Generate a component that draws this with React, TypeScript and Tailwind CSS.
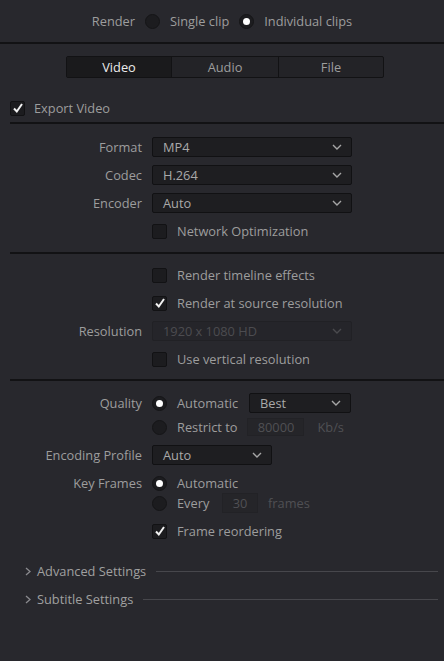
import React from "react"

const font = { fontFamily: '"Open Sans", "Noto Sans", sans-serif' }

function Chevron({ dim }: { dim?: boolean }) {
  return (
    <svg width="10" height="6" viewBox="0 0 10 6" className="shrink-0">
      <polyline
        points="1,1 5,5 9,1"
        fill="none"
        stroke={dim ? "#4a4a4e" : "#a6a6a6"}
        strokeWidth="1.4"
      />
    </svg>
  )
}

function Radio({ on }: { on?: boolean }) {
  return (
    <span className="w-[15px] h-[15px] rounded-full bg-[#1c1c1f] border border-[#151517] flex items-center justify-center shrink-0">
      {on && <span className="w-[7px] h-[7px] rounded-full bg-white" />}
    </span>
  )
}

function Check({ on }: { on?: boolean }) {
  return (
    <span className="w-[15px] h-[15px] rounded-[2px] bg-[#1c1c1f] border border-[#121214] flex items-center justify-center shrink-0">
      {on && (
        <svg width="12" height="12" viewBox="0 0 12 12">
          <polyline points="2,6.5 4.8,9.5 10,2" fill="none" stroke="#f2f2f2" strokeWidth="2" />
        </svg>
      )}
    </span>
  )
}

function Select({ value, width, disabled }: { value: string; width: string; disabled?: boolean }) {
  return (
    <div
      className={`${width} h-[20px] rounded-[2px] border flex items-center justify-between pl-[10px] pr-[9px] ${
        disabled ? "bg-[#25252a] border-[#212125] text-[#4c4c50]" : "bg-[#1e1e21] border-[#111113] text-[#a9a9a9]"
      }`}
    >
      <span className="pt-px">{value}</span>
      <Chevron dim={disabled} />
    </div>
  )
}

function Row({ label, h = "h-[28px]", children }: { label?: string; h?: string; children: React.ReactNode }) {
  return (
    <div className={`flex items-center ${h}`}>
      <div className="w-[142px] shrink-0 text-right pt-px">{label}</div>
      <div className="flex items-center pl-[10px] gap-[10px] whitespace-nowrap">{children}</div>
    </div>
  )
}

function Txt({ children, className = "" }: { children: React.ReactNode; className?: string }) {
  return <span className={`pt-[2px] whitespace-nowrap ${className}`}>{children}</span>
}

function Sep() {
  return <div className="ml-[10px] h-[2px] bg-[#121214]" />
}

function Section({ title }: { title: string }) {
  return (
    <div className="flex items-center h-[28px] pl-[25px] pr-[6px]">
      <svg width="6" height="9" viewBox="0 0 6 9" className="shrink-0">
        <polyline points="1,1 5,4.5 1,8" fill="none" stroke="#8a8a8e" strokeWidth="1.3" />
      </svg>
      <span className="ml-[6px] text-[#a0a0a0] pt-px">{title}</span>
      <div className="flex-1 ml-[10px] h-px bg-[#47474c]" />
    </div>
  )
}

export default function App() {
  return (
    <div className="w-[444px] h-[661px] bg-[#28282d] text-[12.8px] text-[#9d9d9d] overflow-hidden" style={font}>
      {/* Render mode */}
      <div className="h-[42px] flex items-center justify-center gap-[10px]">
        <Txt>Render</Txt>
        <Radio />
        <Txt>Single clip</Txt>
        <Radio on />
        <Txt>Individual clips</Txt>
      </div>
      <div className="h-[2px] bg-[#121214]" />

      {/* Tabs */}
      <div className="mt-[12px] ml-[66px] w-[318px] h-[22px] flex border border-[#121214] rounded-[2px] bg-[#232327]">
        <div className="w-[105px] flex items-center justify-center bg-[#1a1a1c] text-[#ececec] border-r border-[#121214] pt-px">Video</div>
        <div className="w-[107px] flex items-center justify-center border-r border-[#121214] pt-px">Audio</div>
        <div className="flex-1 flex items-center justify-center pt-px">File</div>
      </div>

      <div className="mt-[16px] h-[28px] flex items-center pl-[10px] gap-[9px]">
        <Check on />
        <Txt>Export Video</Txt>
      </div>
      <Sep />

      {/* Format */}
      <div className="mt-[9px]">
        <Row label="Format"><Select value="MP4" width="w-[200px]" /></Row>
        <Row label="Codec"><Select value="H.264" width="w-[200px]" /></Row>
        <Row label="Encoder"><Select value="Auto" width="w-[200px]" /></Row>
        <Row><Check /><Txt>Network Optimization</Txt></Row>
      </div>
      <div className="mt-[7px]"><Sep /></div>

      {/* Resolution */}
      <div className="mt-[7px]">
        <Row><Check /><Txt>Render timeline effects</Txt></Row>
        <Row><Check on /><Txt>Render at source resolution</Txt></Row>
        <Row label="Resolution"><Select value="1920 x 1080 HD" width="w-[200px]" disabled /></Row>
        <Row><Check /><Txt>Use vertical resolution</Txt></Row>
      </div>
      <div className="mt-[6px]"><Sep /></div>

      {/* Quality */}
      <div className="mt-[10px]">
        <Row label="Quality" h="h-[24px]">
          <Radio on />
          <Txt className="w-[62px]">Automatic</Txt>
          <Select value="Best" width="w-[102px]" />
        </Row>
        <Row h="h-[24px]">
          <Radio />
          <Txt>Restrict to</Txt>
          <div className="w-[57px] h-[18px] border border-[#222226] bg-[#252529] text-[#505054] flex items-center justify-center pt-px">80000</div>
          <Txt className="ml-[3px] text-[#505054]">Kb/s</Txt>
        </Row>
      </div>
      <div className="mt-[2px]">
        <Row label="Encoding Profile"><Select value="Auto" width="w-[120px]" /></Row>
      </div>
      <div className="mt-[4px]">
        <Row label="Key Frames" h="h-[20px]">
          <Radio on />
          <Txt>Automatic</Txt>
        </Row>
        <Row h="h-[20px]">
          <Radio />
          <Txt className="w-[35px]">Every</Txt>
          <div className="w-[36px] h-[20px] border border-[#222226] bg-[#252529] text-[#505054] flex items-center justify-center pt-px">30</div>
          <Txt className="text-[#505054]">frames</Txt>
        </Row>
      </div>
      <div className="mt-[4px]">
        <Row><Check on /><Txt>Frame reordering</Txt></Row>
      </div>

      <div className="mt-[12px]">
        <Section title="Advanced Settings" />
        <Section title="Subtitle Settings" />
      </div>
    </div>
  )
}
